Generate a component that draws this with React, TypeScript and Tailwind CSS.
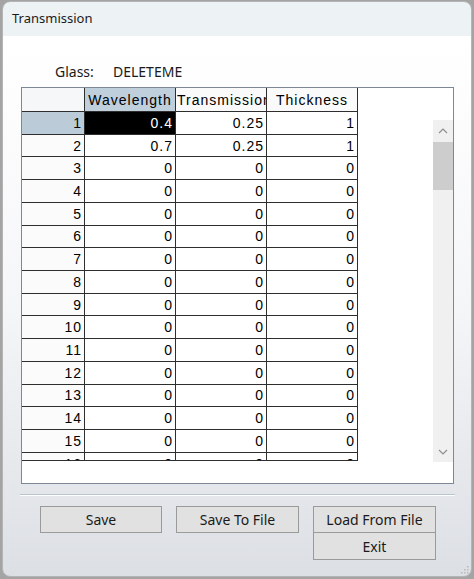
import React from "react";

const rows: [string, string, string][] = [
  ["0.4", "0.25", "1"],
  ["0.7", "0.25", "1"],
  ...Array.from({ length: 14 }, () => ["0", "0", "0"] as [string, string, string]),
];

const gridFont = { fontFamily: '"Liberation Sans", Arial, sans-serif' };
const uiFont = { fontFamily: '"Noto Sans", "Open Sans", sans-serif' };

function Chevron({ up }: { up: boolean }) {
  return (
    <svg width="10" height="6" viewBox="0 0 10 6" fill="none">
      <path
        d={up ? "M1 5 L5 1 L9 5" : "M1 1 L5 5 L9 1"}
        stroke="#8e8e8e"
        strokeWidth="1.2"
      />
    </svg>
  );
}

function Btn({ label, className = "" }: { label: string; className?: string }) {
  return (
    <div
      className={`flex items-center justify-center bg-[#e1e1e1] border border-[#9a9a9a] text-[14px] text-[#1a1a1a] ${className}`}
      style={uiFont}
    >
      {label}
    </div>
  );
}

export default function App() {
  return (
    <div className="w-[474px] h-[579px] bg-[#a4a4a4] pt-[1px] pl-[2px] overflow-hidden">
      <div className="relative w-[470px] h-[576px] rounded-[8px] border border-[#b4b4b4] overflow-hidden flex flex-col">
        {/* title bar */}
        <div
          className="h-[34px] shrink-0 bg-[#edf2f4] flex items-center pl-[9px] pb-[1px] text-[13px] text-[#1b1b1b]"
          style={uiFont}
        >
          Transmission
        </div>
        {/* client */}
        <div className="flex-1 flex flex-col bg-gradient-to-b from-white via-[#f5f6f8] to-[#dcdfe4]">
          <div
            className="mt-[25px] h-[20px] flex items-center pl-[52px] text-[14px] text-[#1a1a1a]"
            style={uiFont}
          >
            <span className="w-[58px]">Glass:</span>
            <span>DELETEME</span>
          </div>
          {/* grid */}
          <div className="mt-[6px] ml-[18px] w-[433px] h-[397px] border border-[#7c8898] bg-white flex">
            <div className="w-[336px] shrink-0 self-start">
              <div className="h-[373px] overflow-hidden border-b border-[#2e2e2e]" style={gridFont}>
                {/* header row */}
                <div className="flex h-[24px] border-b border-[#2e2e2e] text-[14px] tracking-[1px] text-black">
                  <div className="w-[63px] shrink-0 border-r border-[#2e2e2e] bg-[#f5f7f9]" />
                  <div className="w-[91px] shrink-0 border-r border-[#2e2e2e] bg-[#bfcfdc] flex items-center justify-center pt-[2px] overflow-hidden whitespace-nowrap">
                    Wavelength
                  </div>
                  <div className="w-[91px] shrink-0 border-r border-[#2e2e2e] bg-[#fafafa] flex items-center justify-start pt-[2px] pl-[1px] overflow-hidden whitespace-nowrap">
                    Transmission
                  </div>
                  <div className="w-[91px] shrink-0 border-r border-[#2e2e2e] bg-[#fafafa] flex items-center justify-center pt-[2px] overflow-hidden whitespace-nowrap">
                    Thickness
                  </div>
                </div>
                {rows.map((r, i) => (
                  <div
                    key={i}
                    className="flex h-[22.73px] border-b border-[#2e2e2e] text-[14px] tracking-[1px] text-black"
                  >
                    <div
                      className={`w-[63px] shrink-0 border-r border-[#2e2e2e] flex items-center justify-end pt-[1px] pr-[2px] ${
                        i === 0 ? "bg-[#bccbd8]" : "bg-[#fbfbfb]"
                      }`}
                    >
                      {i + 1}
                    </div>
                    {r.map((v, j) => (
                      <div
                        key={j}
                        className={`w-[91px] shrink-0 border-r border-[#2e2e2e] flex items-center justify-end pt-[1px] pr-[2px] ${
                          i === 0 && j === 0 ? "bg-black text-white" : "bg-white"
                        }`}
                      >
                        {v}
                      </div>
                    ))}
                  </div>
                ))}
              </div>
            </div>
            <div className="flex-1" />
            {/* scrollbar */}
            <div className="w-[20px] mt-[32px] h-[342px] bg-[#f0f0f0] flex flex-col">
              <div className="h-[22px] flex items-center justify-center">
                <Chevron up />
              </div>
              <div className="h-[48px] bg-[#cdcdcd]" />
              <div className="flex-1" />
              <div className="h-[21px] flex items-center justify-center">
                <Chevron up={false} />
              </div>
            </div>
          </div>
          {/* separator */}
          <div className="mt-[10px] ml-[17px] w-[435px] h-[2px] border-t border-[#b7c4d1] border-b border-b-white" />
          {/* buttons */}
          <div className="mt-[10px] ml-[37px] flex gap-[14px] items-start">
            <Btn label="Save" className="w-[122px] h-[27px]" />
            <Btn label="Save To File" className="w-[123px] h-[27px]" />
            <div className="flex flex-col">
              <Btn label="Load From File" className="w-[123px] h-[27px]" />
              <Btn label="Exit" className="w-[123px] h-[27px] border-t-0" />
            </div>
          </div>
        </div>
        {/* resize grip */}
        <svg className="absolute right-[2px] bottom-[2px]" width="10" height="10" viewBox="0 0 10 10">
          {[
            [8, 2],
            [8, 5],
            [5, 5],
            [8, 8],
            [5, 8],
            [2, 8],
          ].map(([x, y], k) => (
            <rect key={k} x={x} y={y} width="1.5" height="1.5" fill="#b9b9b9" />
          ))}
        </svg>
      </div>
    </div>
  );
}
